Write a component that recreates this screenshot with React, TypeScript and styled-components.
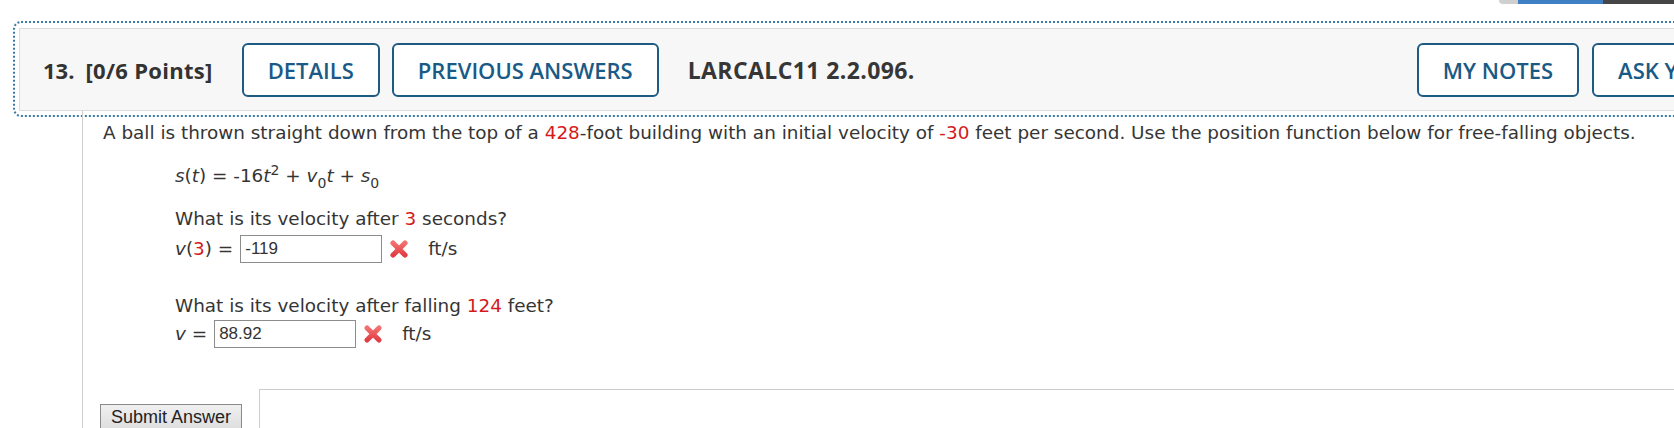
import React from 'react';
import styled, { createGlobalStyle } from 'styled-components';

const GlobalStyle = createGlobalStyle`
  html, body { margin: 0; padding: 0; background: #ffffff; }
  body { width: 1674px; height: 428px; overflow: hidden; }
  * { box-sizing: border-box; }
`;

const Page = styled.div`
  width: 1674px;
  height: 428px;
  overflow: hidden;
`;

const TopStrip = styled.div`
  display: flex;
  justify-content: flex-end;
  height: 4px;
`;

const StripSeg = styled.div<{ $w: number; $c: string; $round?: boolean }>`
  width: ${(p) => p.$w}px;
  height: 4px;
  background: ${(p) => p.$c};
  border-bottom-left-radius: ${(p) => (p.$round ? '4px' : '0')};
`;

const Question = styled.div`
  width: 1900px;
`;

const FocusRing = styled.div`
  margin: 17px 0 0 13px;
  width: 1866px;
  border: 2px dotted #3a7aa6;
  border-radius: 8px;
  padding: 5px 0 4px 4px;
`;

const Header = styled.div`
  display: flex;
  align-items: center;
  height: 83px;
  background: #f7f7f7;
  border: 1px solid #dcdcdc;
  padding: 0 23px 0 23px;
  font-family: 'Open Sans', 'Liberation Sans', sans-serif;
  font-size: 22px;
`;

const QNumber = styled.span`
  font-weight: 700;
  color: #333;
`;

const Points = styled.span`
  font-weight: 700;
  color: #333;
  margin-left: 11px;
  margin-right: 29px;
  letter-spacing: 0.3px;
`;

const HeaderButton = styled.button`
  height: 54px;
  padding: 0 24px;
  border: 2px solid #1e5b83;
  border-radius: 6px;
  background: #ffffff;
  color: #1a5a86;
  font-family: 'Open Sans', 'Liberation Sans', sans-serif;
  font-size: 22px;
  font-weight: 600;
  white-space: nowrap;
  cursor: pointer;
`;

const LeftGroup = styled.div`
  display: flex;
  align-items: center;
  gap: 12px;
`;

const Reference = styled.span`
  font-weight: 700;
  font-size: 23px;
  letter-spacing: 0.4px;
  color: #363636;
  margin-left: 29px;
`;

const RightGroup = styled.div`
  display: flex;
  align-items: center;
  gap: 13px;
  margin-left: auto;
`;

const Body = styled.div`
  margin-left: 82px;
  margin-top: -6px;
  border-left: 1px solid #cfcfcf;
  padding: 10px 0 0 20px;
  font-family: 'DejaVu Sans', Verdana, sans-serif;
  font-size: 18.4px;
  line-height: 24px;
  color: #353535;
  height: 330px;
`;

const Para = styled.div`
  white-space: nowrap;
`;

const Red = styled.span`
  color: #d41b1b;
`;

const Indented = styled.div<{ $top: number }>`
  margin-left: 72px;
  margin-top: ${(p) => p.$top}px;
  white-space: nowrap;
`;

const Var = styled.i`
  font-style: italic;
`;

const Sup = styled.sup`
  font-size: 14px;
  line-height: 0;
  vertical-align: 7px;
`;

const Sub = styled.sub`
  font-size: 14px;
  line-height: 0;
  vertical-align: -6px;
`;

const AnswerRow = styled.div<{ $top: number }>`
  display: flex;
  align-items: center;
  margin-left: 72px;
  margin-top: ${(p) => p.$top}px;
  white-space: nowrap;
`;

const AnswerInput = styled.input`
  width: 142px;
  height: 28px;
  margin-left: 7px;
  border: 1px solid #8c8c8c;
  padding: 0 4px;
  font-family: Arial, 'Liberation Sans', sans-serif;
  font-size: 17px;
  color: #333;
  background: #fff;
  outline: none;
`;

const WrongMark = styled.svg`
  width: 20px;
  height: 20px;
  margin-left: 7px;
  margin-right: 19px;
`;

const Unit = styled.span``;

const BottomRow = styled.div`
  display: flex;
  align-items: flex-start;
  margin-top: 41px;
  margin-left: -3px;
`;

const SubmitButton = styled.button`
  margin-top: 15px;
  height: 26px;
  padding: 1px 10px 0;
  background: linear-gradient(#f0f0f0, #dedede);
  border: 1px solid #8a8a8a;
  border-radius: 0;
  font-family: Arial, 'Liberation Sans', sans-serif;
  font-size: 18px;
  color: #222;
  white-space: nowrap;
`;

const ResponseBox = styled.div`
  flex: 1;
  margin-left: 17px;
  height: 80px;
  border-top: 1px solid #cccccc;
  border-left: 1px solid #cccccc;
`;

const XIcon = () => (
  <WrongMark viewBox="0 0 20 20">
    <defs>
      <linearGradient id="xg" x1="0" y1="0" x2="0" y2="1">
        <stop offset="0" stopColor="#f27070" />
        <stop offset="1" stopColor="#e23d44" />
      </linearGradient>
    </defs>
    <path
      d="M4 4 L16 16 M16 4 L4 16"
      stroke="url(#xg)"
      strokeWidth="5.2"
      strokeLinecap="round"
      fill="none"
    />
  </WrongMark>
);

export default function App() {
  return (
    <>
      <GlobalStyle />
      <Page>
        <TopStrip>
          <StripSeg $w={19} $c="#cfcfcf" $round />
          <StripSeg $w={85} $c="#3f80c4" />
          <StripSeg $w={71} $c="#464646" />
        </TopStrip>
        <Question>
          <FocusRing>
            <Header>
              <QNumber>13.</QNumber>
              <Points>[0/6 Points]</Points>
              <LeftGroup>
                <HeaderButton>DETAILS</HeaderButton>
                <HeaderButton>PREVIOUS ANSWERS</HeaderButton>
              </LeftGroup>
              <Reference>LARCALC11 2.2.096.</Reference>
              <RightGroup>
                <HeaderButton>MY NOTES</HeaderButton>
                <HeaderButton>ASK YOUR TEACHER</HeaderButton>
              </RightGroup>
            </Header>
          </FocusRing>
        </Question>
        <Body>
          <Para>
            A ball is thrown straight down from the top of a <Red>428</Red>-foot building with an
            initial velocity of <Red>-30</Red> feet per second. Use the position function below for
            free-falling objects.
          </Para>
          <Indented $top={19}>
            <Var>s</Var>(<Var>t</Var>) = -16<Var>t</Var>
            <Sup>2</Sup> + <Var>v</Var>
            <Sub>0</Sub>
            <Var>t</Var> + <Var>s</Var>
            <Sub>0</Sub>
          </Indented>
          <Indented $top={19}>
            What is its velocity after <Red>3</Red> seconds?
          </Indented>
          <AnswerRow $top={4}>
            <span>
              <Var>v</Var>(<Red>3</Red>) =
            </span>
            <AnswerInput readOnly value="-119" />
            <XIcon />
            <Unit>ft/s</Unit>
          </AnswerRow>
          <Indented $top={31}>
            What is its velocity after falling <Red>124</Red> feet?
          </Indented>
          <AnswerRow $top={2}>
            <span>
              <Var>v</Var> =
            </span>
            <AnswerInput readOnly value="88.92" />
            <XIcon />
            <Unit>ft/s</Unit>
          </AnswerRow>
          <BottomRow>
            <SubmitButton>Submit Answer</SubmitButton>
            <ResponseBox />
          </BottomRow>
        </Body>
      </Page>
    </>
  );
}
